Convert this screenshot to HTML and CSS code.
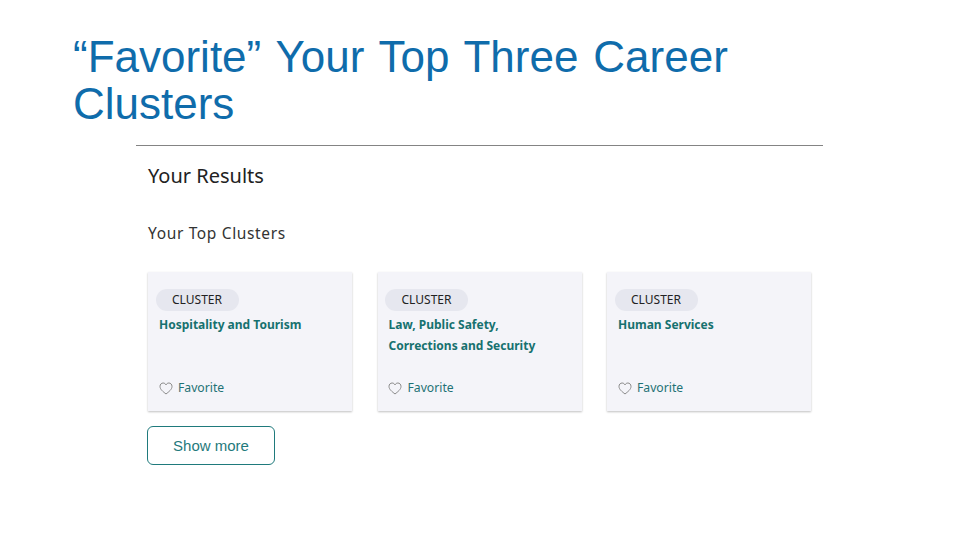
FILE: index.html
```html
<!DOCTYPE html>
<html lang="en">
<head>
    <meta charset="UTF-8">
    <title>Favorite Your Top Three Career Clusters</title>
    <link rel="stylesheet" href="styles.css">
</head>
<body>
    <h1 class="slide-title">“Favorite” Your Top Three Career Clusters</h1>
    <main class="panel">
        <h2 class="results-title">Your Results</h2>
        <h3 class="clusters-title">Your Top Clusters</h3>
        <div class="cards">
            <div class="card">
                <span class="tag">CLUSTER</span>
                <div class="card-name">Hospitality and Tourism</div>
                <div class="favorite">
                    <svg class="heart" viewBox="0 0 14 13"><path d="M7 12 C4 9.6 1 7.4 1 4.4 C1 2.4 2.4 1 4.1 1 C5.4 1 6.4 1.7 7 2.9 C7.6 1.7 8.6 1 9.9 1 C11.6 1 13 2.4 13 4.4 C13 7.4 10 9.6 7 12 Z"/></svg>
                    <span>Favorite</span>
                </div>
            </div>
            <div class="card">
                <span class="tag">CLUSTER</span>
                <div class="card-name">Law, Public Safety,<br>Corrections and Security</div>
                <div class="favorite">
                    <svg class="heart" viewBox="0 0 14 13"><path d="M7 12 C4 9.6 1 7.4 1 4.4 C1 2.4 2.4 1 4.1 1 C5.4 1 6.4 1.7 7 2.9 C7.6 1.7 8.6 1 9.9 1 C11.6 1 13 2.4 13 4.4 C13 7.4 10 9.6 7 12 Z"/></svg>
                    <span>Favorite</span>
                </div>
            </div>
            <div class="card">
                <span class="tag">CLUSTER</span>
                <div class="card-name">Human Services</div>
                <div class="favorite">
                    <svg class="heart" viewBox="0 0 14 13"><path d="M7 12 C4 9.6 1 7.4 1 4.4 C1 2.4 2.4 1 4.1 1 C5.4 1 6.4 1.7 7 2.9 C7.6 1.7 8.6 1 9.9 1 C11.6 1 13 2.4 13 4.4 C13 7.4 10 9.6 7 12 Z"/></svg>
                    <span>Favorite</span>
                </div>
            </div>
        </div>
        <button class="show-more">Show more</button>
    </main>
</body>
</html>
```

FILE: styles.css
```css
html, body {
    margin: 0;
    padding: 0;
}
body {
    width: 960px;
    height: 540px;
    overflow: hidden;
    background-color: #fff;
    font-family: "Noto Sans", sans-serif;
}
.slide-title {
    margin: 0;
    padding: 33px 200px 0 73px;
    font-family: "Liberation Sans", Arial, sans-serif;
    font-size: 44px;
    font-weight: 400;
    line-height: 47px;
    word-spacing: 2.7px;
    color: #0f6cab;
}
.panel {
    width: 663px;
    margin: 18px 0 0 136px;
    padding: 16px 12px 0;
    border-top: 1px solid #848484;
}
.results-title {
    margin: 0;
    font-size: 20px;
    font-weight: 400;
    line-height: 28px;
    color: #222;
}
.clusters-title {
    margin: 32px 0 0;
    font-size: 15.5px;
    font-weight: 400;
    line-height: 22px;
    letter-spacing: 0.65px;
    color: #333;
}
.cards {
    display: flex;
    gap: 25.5px;
    margin-top: 28px;
}
.card {
    position: relative;
    width: 204.8px;
    height: 138.5px;
    padding: 16.5px 0 0 7.5px;
    box-sizing: border-box;
    background-color: #f4f4f9;
    box-shadow: 0 1px 2px rgba(0, 0, 0, 0.25);
}
.tag {
    display: block;
    width: 83px;
    height: 22px;
    border-radius: 11px;
    background-color: #e6e7ef;
    font-size: 12px;
    line-height: 22px;
    text-align: center;
    color: #222;
}
.card-name {
    margin: 3.5px 0 0 3.5px;
    font-size: 12px;
    font-weight: 700;
    line-height: 21px;
    color: #16716f;
}
.favorite {
    position: absolute;
    left: 10.5px;
    top: 107px;
    display: flex;
    align-items: center;
    gap: 5.5px;
    font-size: 12.2px;
    line-height: 18px;
    color: #1f7275;
}
.heart {
    width: 14px;
    height: 13px;
    fill: none;
    stroke: #8a8a8a;
    stroke-width: 1;
}
.show-more {
    display: block;
    width: 128px;
    height: 39px;
    margin: 15.5px 0 0 -1px;
    padding: 0;
    background-color: #fff;
    border: 1px solid #1f7a7c;
    border-radius: 6px;
    font-family: "Liberation Sans", Arial, sans-serif;
    font-size: 15px;
    color: #1f7a7c;
}
```
